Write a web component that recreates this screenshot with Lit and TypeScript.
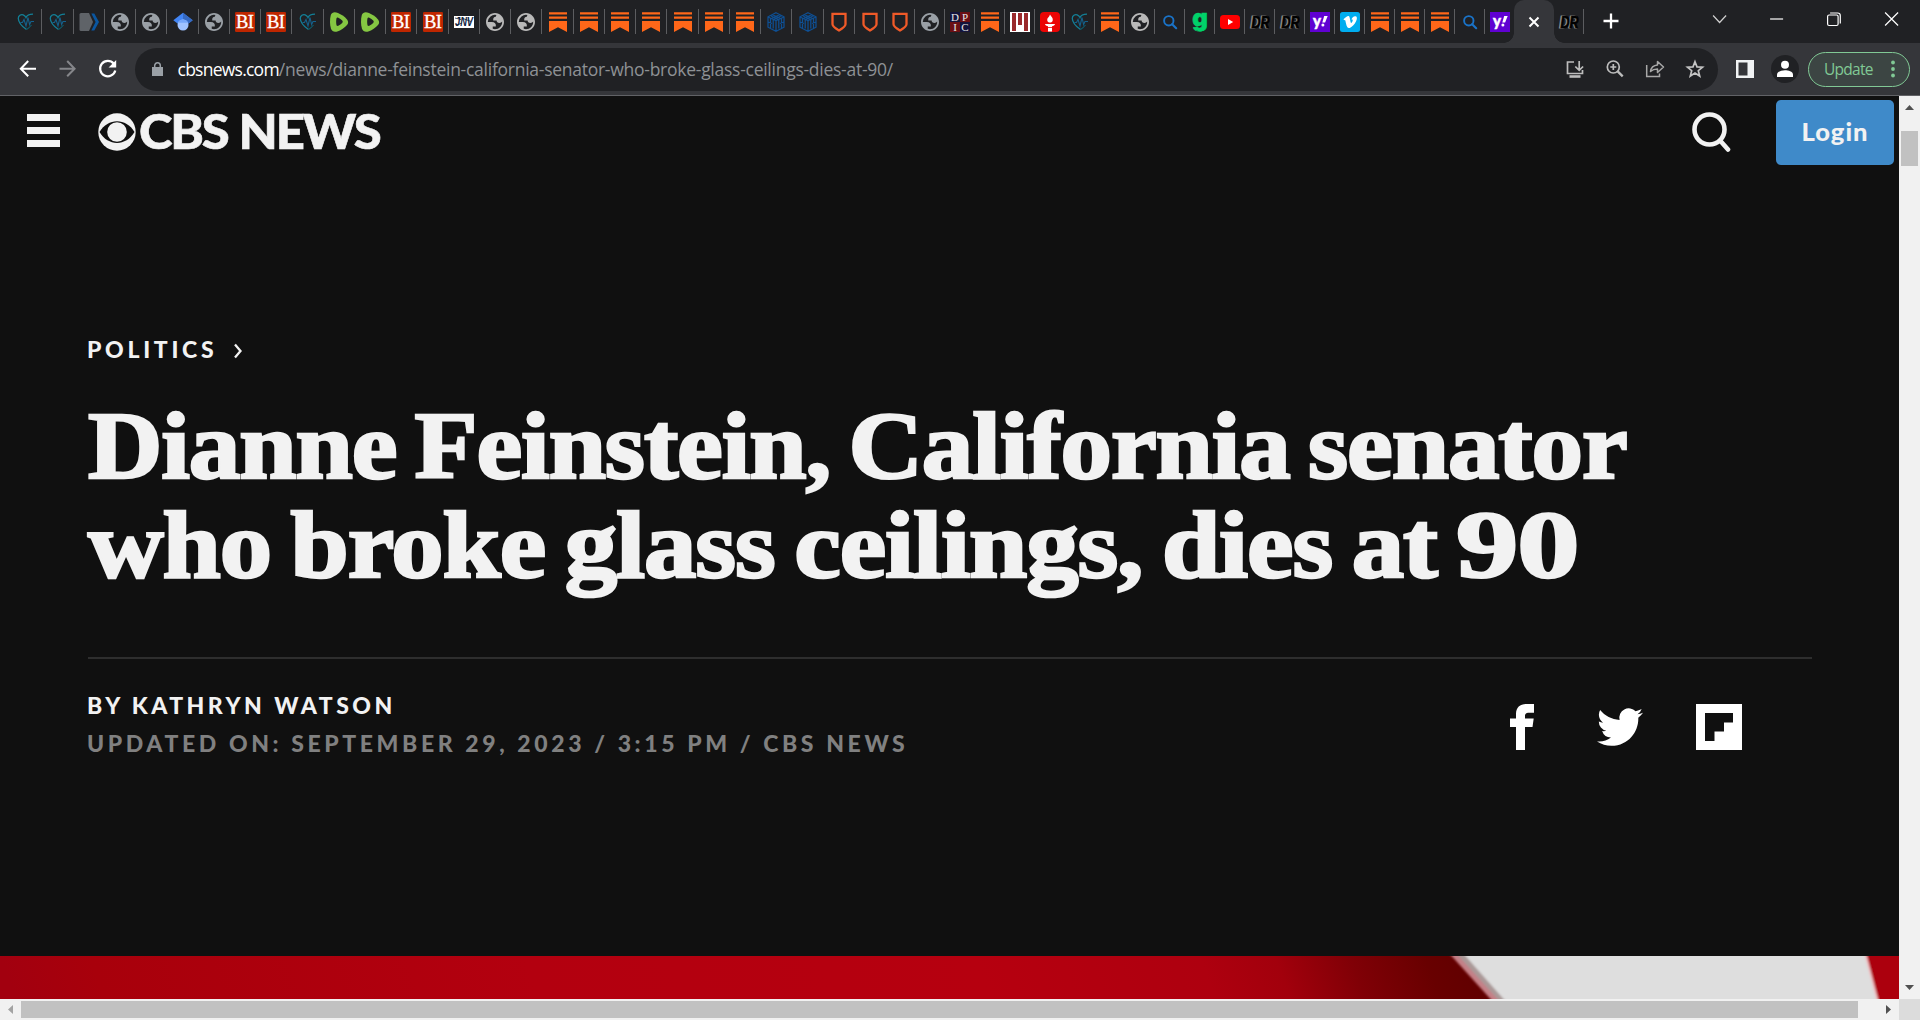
import { LitElement, html, css, svg, nothing } from 'lit';
import type { TemplateResult } from 'lit';
import { customElement, property } from 'lit/decorators.js';

const globe = (fill: string) => svg`
  <g transform="translate(-.8 -.8) scale(.9)">
    <path fill=${fill} fill-rule="evenodd" d="M12 2C6.48 2 2 6.48 2 12s4.48 10 10 10 10-4.48 10-10S17.52 2 12 2zM4 12h4.4c3.407.022 4.922 1.73 4.543 5.127H9.488v2.47a8.004 8.004 0 0 0 10.498-8.083C19.327 12.504 18.332 13 17 13c-2.137 0-3.206-.916-3.206-2.75h-3.748c-.274-2.728.683-4.092 2.87-4.092 0-.975.327-1.597.811-1.97A8.004 8.004 0 0 0 4 12z"/>
  </g>`;

const favicons: Record<string, TemplateResult> = {
  heart: svg`
    <path d="M10.5 17.5C6 14.500 2.500 10.500 2.300 6.500 2.200 3.500 5 2 7.200 2.800c1.400.5 2.300 1.600 2.800 2.800C10.800 3.500 12.500 2.300 17 2.200" fill="none" stroke="#137f96" stroke-width="1.300"/>
    <path d="M10.500 17.500c2-1.300 3.700-2.700 5-4.500" fill="none" stroke="#0d5968" stroke-width="1.200"/>
    <path d="M4.500 10.500h2l1.500-3 2 6.500 2-8.500 1.600 7 1.400-3h3" fill="none" stroke="#14618c" stroke-width="1.100"/>`,
  tag: svg`
    <path d="M.5 2.500q0-1.500 1.500-1.500h8l4 9-4 9H2Q.5 19 .5 17.500z" fill="#5f6368"/>
    <path d="M12.300 1.500h3L20 10l-4.700 8.500h-3L16.600 10z" fill="#0a56a0"/>`,
  globe: globe('#9aa0a6'),
  lightGlobe: globe('#b9b9b9'),
  scholar: svg`
    <path d="M10 .8L.3 8.300l4.200 3.300h11l4.200-3.300z" fill="#4285f4"/>
    <path d="M10 .8l9.700 7.500-4.200 3.300L10 7z" fill="#356ac3"/>
    <circle cx="10" cy="13" r="5.500" fill="#a0c3ff"/>
    <path d="M5 10.700a5.500 5.500 0 0 1 10 0z" fill="#76a7fa"/>`,
  bi: svg`
    <rect width="20" height="20" rx="1.200" fill="#bf2600"/>
    <text x="9.700" y="16.200" text-anchor="middle" font-family="Liberation Serif, serif" font-size="18.500" letter-spacing="-.6" fill="#fff" stroke="#fff" stroke-width=".3">BI</text>`,
  rumble: svg`
    <path d="M1.800 3C3-.3 6.200-.2 9 1c3 1.300 6.600 3.500 9 6.400 1.500 1.900 1.500 3.800 0 5.600-2.600 3-5.800 5-9 6.200-3 1.100-5.900.8-7-2.400C.7 12.800.7 7 1.800 3z" fill="#85c742"/>
    <path d="M7.500 6.300c.3-.8 1-.9 1.800-.5 1.500.7 2.900 1.600 3.900 2.800.7.800.7 1.600 0 2.400-1.100 1.200-2.400 2.100-3.900 2.800-.8.300-1.500.2-1.800-.6-.5-2-.5-4.900 0-6.900z" fill="#202124"/>`,
  nw: svg`
    <rect y="4" width="20" height="12" fill="#fff"/>
    <text x="1" y="14.300" font-family="Liberation Sans, sans-serif" font-weight="700" font-style="italic" font-size="12" textLength="18" lengthAdjust="spacingAndGlyphs" fill="#10243f">JNV</text>
    <path d="M1 6l6 1.500M9 6.500l8 3M3 13l5-2" stroke="#10243f" stroke-width=".8"/>`,
  substack: svg`
    <path d="M1 .2h18v2.300H1zM1 4.500h18v2.300H1zM1 8.900h18V20l-9-4.800L1 20z" fill="#ff6719"/>`,
  cube: svg`
    <path d="M10 .8l8 4v10.400l-8 4-8-4V4.800zM2 5l8 3.600L18 5M10 8.500V19M5 4l8 3.700M6.500 2.800l8 3.700M13.500 2.800l-8 3.700M15.500 3.800l-8 3.700M4.500 6.500v10M7.200 7.500v9M12.800 7.500v9M15.500 6.500v10M2 10l4 1.500M14 11.500l4-1.500" fill="none" stroke="#0e4f93" stroke-width="1.250"/>`,
  shield: svg`
    <path d="M3.500 1.900h13v10.300c0 2-2.800 4-6.500 6.200-3.700-2.200-6.500-4.200-6.500-6.200z" fill="none" stroke="#f05a28" stroke-width="2.300"/>`,
  dpic: svg`
    <path d="M0 0h10v10H0zM10 10h10v10H10z" fill="#14143c"/>
    <path d="M10 0h10v10H10zM0 10h10v10H0z" fill="#6b0f14"/>
    <g font-family="Liberation Serif, serif" font-size="11" fill="#e8e8e8" text-anchor="middle">
      <text x="5" y="8.500">D</text><text x="15" y="8.500">P</text><text x="5" y="18.500">I</text><text x="15" y="18.500">C</text>
    </g>`,
  bars: svg`
    <rect width="20" height="20" fill="#fff"/>
    <path d="M2 1h4v18H2zM8 1h4v12H8zM14 1h4v18h-4z" fill="#9a2a2c"/>`,
  torch: svg`
    <rect width="20" height="20" rx="4" fill="#eb0505"/>
    <path d="M10 2.500c.8 2 3 3 2.800 5.400-.2 1.800-1.500 2.700-2.800 2.700s-2.700-.9-2.800-2.700C7 6 9.300 5 10 2.500zM5 12h10c-.3 1.500-1.500 2-3 2.200V19.500H8v-5.300c-1.500-.2-2.700-.7-3-2.200z" fill="#fff"/>
    <path d="M8 15h4v.8H8z" fill="#eb0505"/>`,
  search: svg`
    <circle cx="8.800" cy="8.800" r="4.700" fill="none" stroke="#1a73c8" stroke-width="1.900"/>
    <path d="M12.200 12.200l4 4" stroke="#1a73c8" stroke-width="2.100" stroke-linecap="round"/>`,
  g: svg`
    <text x="10" y="14" text-anchor="middle" font-family="Inter, Liberation Sans, sans-serif" font-weight="900" font-size="24" fill="#00d26a" stroke="#00d26a" stroke-width=".6">g</text>`,
  youtube: svg`
    <rect y="3" width="20" height="14" rx="3.500" fill="#f00"/>
    <path d="M8 7l5.200 3L8 13z" fill="#fff"/>`,
  dr: svg`
    <g font-family="Liberation Sans, sans-serif" font-weight="700" font-style="italic" font-size="16.500">
      <text x="0" y="16" textLength="18.500" lengthAdjust="spacingAndGlyphs" fill="#969696" stroke="#8c8c8c" stroke-width=".8">DR</text>
      <text x="1.600" y="16" textLength="18" lengthAdjust="spacingAndGlyphs" fill="#000" stroke="#000" stroke-width=".7">DR</text>
    </g>`,
  yahoo: svg`
    <rect width="20" height="20" fill="#6001d2"/>
    <text x="3" y="14" font-family="Lato, sans-serif" font-weight="900" font-size="15" fill="#fff" stroke="#fff" stroke-width=".5">y</text>
    <path d="M14.200 4h3.500l-2.600 6.500h-2.800z" fill="#fff"/><circle cx="12.900" cy="13" r="1.500" fill="#fff"/>`,
  vimeo: svg`
    <rect width="20" height="20" rx="2.500" fill="#00adef"/>
    <path d="M3.500 7.200c2-1.800 3.900-3.300 5-3.100 1.700.3 1.600 6.300 2.600 6.900.6.300 1.900-1.900 1.600-2.900-.2-.6-.8-.6-1.300-.3.700-2.600 2.300-3.900 4.200-3.600 3.500.7-.6 9.300-5.800 11.700-2.300.8-3-1.400-3.600-3.600-.5-2-.9-4.200-1.300-4.200l-.7.200z" fill="#fff"/>`,
};

// Background tabs before the active one; the first group keeps a slightly wider slot.
const wideTabs = [
  'heart', 'heart', 'tag', 'globe', 'globe', 'scholar', 'globe', 'bi', 'bi', 'heart', 'rumble', 'rumble',
  'bi', 'bi', 'nw', 'lightGlobe', 'lightGlobe', 'substack', 'substack', 'substack', 'substack', 'substack',
  'substack', 'substack', 'cube', 'cube', 'shield',
];
const narrowTabs = [
  'shield', 'shield', 'globe', 'dpic', 'substack', 'bars', 'torch', 'heart', 'substack', 'lightGlobe', 'search',
  'g', 'youtube', 'dr', 'dr', 'yahoo', 'vimeo', 'substack', 'substack', 'substack', 'search', 'yahoo',
];

@customElement('browser-tab')
export class BrowserTab extends LitElement {
  static styles = css`
    :host {
      display: flex;
      align-items: center;
      justify-content: center;
      flex: none;
      width: 30px;
      height: 25px;
      padding-left: 1.5px;
      box-sizing: border-box;
      border-right: 1px solid #5c5d60;
    }

    :host([wide]) {
      width: 31.25px;
      padding-left: 0.5px;
    }

    :host([last]) {
      border-right-color: transparent;
    }

    svg {
      display: block;
      overflow: visible;
    }
  `;

  @property() icon = 'globe';

  render() {
    return html`<svg width="20" height="20" viewBox="0 0 20 20">${favicons[this.icon] ?? nothing}</svg>`;
  }
}

@customElement('browser-chrome')
export class BrowserChrome extends LitElement {
  static styles = css`
    :host {
      display: block;
      font-family: 'Open Sans', 'Noto Sans', sans-serif;
    }

    svg {
      display: block;
      fill: none;
    }

    .tabs {
      display: flex;
      height: 43px;
      padding-left: 11px;
      background: #202124;
      align-items: flex-start;
    }

    browser-tab {
      margin-top: 9px;
    }

    .active {
      position: relative;
      flex: none;
      width: 40px;
      height: 43px;
      margin-left: -1px;
      display: flex;
      align-items: center;
      justify-content: center;
      background: #35363a;
      border-radius: 10px 10px 0 0;
    }

    .active::before,
    .active::after {
      content: '';
      position: absolute;
      bottom: 0;
      width: 10px;
      height: 10px;
    }

    .active::before {
      left: -10px;
      background: radial-gradient(circle at 0 0, transparent 9.5px, #35363a 10px);
    }

    .active::after {
      right: -10px;
      background: radial-gradient(circle at 100% 0, transparent 9.5px, #35363a 10px);
    }

    .new-tab {
      margin: 13px 0 0 19.5px;
    }

    .window {
      display: flex;
      margin-left: auto;
      height: 37px;
      align-items: center;
    }

    .window svg {
      width: 57.3px;
    }

    .toolbar {
      display: flex;
      align-items: center;
      height: 52px;
      padding-left: 8px;
      background: #35363a;
      border-bottom: 1px solid #616266;
    }

    .btn {
      flex: none;
      width: 40px;
      height: 40px;
      display: flex;
      align-items: center;
      justify-content: center;
    }

    .omnibox {
      flex: none;
      box-sizing: border-box;
      display: flex;
      align-items: center;
      width: 1583px;
      height: 43px;
      margin: 0 7px;
      padding: 0 3px 0 17px;
      border-radius: 22px;
      background: #202124;
    }

    .url {
      flex: 1;
      margin-left: 14.5px;
      font-size: 17.5px;
      line-height: 24px;
      letter-spacing: -0.26px;
      white-space: nowrap;
      color: #8e9195;
    }

    .host {
      color: #fff;
      letter-spacing: -0.75px;
    }

    .avatar {
      width: 28px;
      height: 28px;
      border-radius: 50%;
      background: #202124;
    }

    .update {
      box-sizing: border-box;
      display: flex;
      align-items: center;
      justify-content: space-between;
      width: 102px;
      height: 35px;
      margin-left: 3px;
      padding: 0 13px 0 15px;
      border: 1px solid #81c995;
      border-radius: 18px;
      background: #3c4543;
      color: #81c995;
      font-size: 15.5px;
      letter-spacing: -0.75px;
    }
  `;

  render() {
    return html`
      <div class="tabs">
        ${wideTabs.map((icon) => html`<browser-tab wide icon=${icon}></browser-tab>`)}
        ${narrowTabs.map(
          (icon, i) => html`<browser-tab icon=${icon} ?last=${i === narrowTabs.length - 1}></browser-tab>`,
        )}
        <div class="active">
          <svg width="12" height="12" viewBox="0 0 12 12"><path d="M1.500 1.500l9 9M10.500 1.500l-9 9" stroke="#fff" stroke-width="2"/></svg>
        </div>
        <browser-tab icon="dr"></browser-tab>
        <svg class="new-tab" width="16" height="16" viewBox="0 0 16 16"><path d="M8 .5v15M.5 8h15" stroke="#fff" stroke-width="2.300"/></svg>
        <div class="window">
          <svg height="20" viewBox="-28.600 -10 57.300 20"><path d="M-6.500-3.500L0 3.500l6.500-7" stroke="#d0d0d0" stroke-width="1.200"/></svg>
          <svg height="20" viewBox="-28.600 -10 57.300 20"><path d="M-6.500 0h13" stroke="#fff" stroke-width="1.200"/></svg>
          <svg height="20" viewBox="-28.600 -10 57.300 20">
            <rect x="-6" y="-4" width="10.500" height="10.500" rx="1.500" stroke="#fff" stroke-width="1.200"/>
            <path d="M-3.500-6H4q2.700 0 2.700 2.700v7.800" stroke="#fff" stroke-width="1.200"/>
          </svg>
          <svg height="20" viewBox="-28.600 -10 57.300 20"><path d="M-6.500-6.500l13 13M6.500-6.500l-13 13" stroke="#fff" stroke-width="1.200"/></svg>
        </div>
      </div>

      <div class="toolbar">
        <div class="btn"><svg width="20" height="20" viewBox="0 0 20 20"><path d="M18 9.700H3M10.200 2L2.800 9.700l7.400 7.600" stroke="#fff" stroke-width="2"/></svg></div>
        <div class="btn"><svg width="20" height="20" viewBox="0 0 20 20"><path d="M1.500 9.700h15M9.200 2l7.400 7.700-7.400 7.600" stroke="#85868a" stroke-width="2"/></svg></div>
        <div class="btn"><svg width="20" height="20" viewBox="0 0 20 20"><path d="M17.300 11.500A7.700 7.700 0 1 1 15.800 4.700" stroke="#fff" stroke-width="2.200"/><path d="M18.200 1v7.600h-7.600z" fill="#fff"/></svg></div>

        <div class="omnibox">
          <svg width="11" height="14" viewBox="0 0 11 14"><path d="M0 5h11v9H0z" fill="#9aa0a6"/><path d="M2.700 6V3.600a2.800 2.800 0 0 1 5.600 0V6" stroke="#9aa0a6" stroke-width="1.500"/></svg>
          <div class="url"><span class="host">cbsnews.com</span>/news/dianne-feinstein-california-senator-who-broke-glass-ceilings-dies-at-90/</div>
          <div class="btn"><svg width="20" height="20" viewBox="0 0 20 20" stroke="#bdbdbd" stroke-width="1.700"><path d="M9 3H2.500v11.500h15V11M14.200 2v9M10.300 7.500l3.900 3.900 3.900-3.900"/><path d="M4.500 17.500h11" stroke-width="2.600"/></svg></div>
          <div class="btn"><svg width="20" height="20" viewBox="0 0 20 20" stroke="#bdbdbd" stroke-width="1.700"><circle cx="8.300" cy="8" r="6"/><path d="M5.300 8h6M8.300 5v6"/><path d="M12.700 12.400l5 5" stroke-width="2.300"/></svg></div>
          <div class="btn"><svg width="20" height="20" viewBox="0 0 20 20" stroke="#a8a8a8" stroke-width="1.500"><path d="M1.700 6v11.500h12.800V14.500"/><path d="M5.500 12.500c.5-4 3-6.300 7-6.600V2.500l6 5.500-6 5.500V10c-3 0-5 .6-7 2.500z" stroke-linejoin="round"/></svg></div>
          <div class="btn"><svg width="20" height="20" viewBox="0 0 20 20" stroke="#c4c4c4" stroke-width="1.700"><path d="M10 2.700l2 5.200 5.500.3-4.200 3.500 1.400 5.300L10 14l-4.700 3 1.400-5.300-4.200-3.500 5.500-.3z"/></svg></div>
        </div>

        <div class="btn"><svg width="18" height="18" viewBox="0 0 18 18"><path d="M0 0h18v18H0z" fill="#f1f3f4"/><path d="M2.500 2.500h9v13h-9z" fill="#35363a"/></svg></div>
        <div class="btn"><div class="avatar"><svg width="28" height="28" viewBox="0 0 28 28"><circle cx="14" cy="9.800" r="4" fill="#fff"/><path d="M6 22v-2.500c0-3 5-4.300 8-4.300s8 1.300 8 4.300V22z" fill="#fff"/></svg></div></div>
        <div class="update">
          Update
          <svg width="6" height="18" viewBox="0 0 6 18"><g fill="#81c995"><circle cx="3" cy="2.500" r="1.900"/><circle cx="3" cy="9" r="1.900"/><circle cx="3" cy="15.500" r="1.900"/></g></svg>
        </div>
      </div>
    `;
  }
}

@customElement('news-page')
export class NewsPage extends LitElement {
  static styles = css`
    :host {
      display: flex;
      flex-direction: column;
      background: #101010;
      color: #f2f2f2;
      font-family: Lato, sans-serif;
      overflow: hidden;
    }

    svg {
      display: block;
      flex: none;
    }

    header {
      display: flex;
      align-items: center;
      height: 71px;
      padding: 0 5px 0 27px;
      box-sizing: border-box;
    }

    .menu {
      display: grid;
      gap: 6px;
      width: 33px;
      margin-bottom: 2px;
    }

    .menu i {
      height: 7px;
      background: #f2f2f2;
    }

    .eye {
      margin: 0 0 0 38px;
    }

    .brand {
      margin-left: 3px;
      font-size: 47px;
      font-weight: 900;
      line-height: 47px;
      letter-spacing: -2px;
      word-spacing: 1px;
      white-space: nowrap;
      transform: scaleX(1.08);
      transform-origin: left;
      -webkit-text-stroke: 0.6px #f2f2f2;
    }

    .find {
      margin-left: auto;
    }

    .login {
      display: flex;
      align-items: center;
      justify-content: center;
      box-sizing: border-box;
      width: 118px;
      height: 65px;
      margin: 2px 0 0 45px;
      padding-bottom: 3px;
      border-radius: 5px;
      background: #3f8ac9;
      font-size: 25.5px;
      font-weight: 900;
      letter-spacing: 1px;
    }

    article {
      flex: 1;
      padding: 167px 87px 0 88px;
    }

    .section {
      display: flex;
      align-items: center;
      height: 30px;
      margin-left: -1px;
      font-size: 23px;
      font-weight: 900;
      letter-spacing: 3.7px;
    }

    .section svg {
      margin: 3px 0 0 16px;
    }

    h1 {
      margin: 32px 0 0;
      font-family: 'Liberation Serif', serif;
      font-size: 96px;
      font-weight: 700;
      line-height: 99px;
      letter-spacing: -1px;
      white-space: nowrap;
      -webkit-text-stroke: 2.6px #f2f2f2;
    }

    h1 span {
      display: block;
      transform-origin: left;
    }

    .one {
      word-spacing: -6px;
      transform: scaleX(1.073);
    }

    .two {
      word-spacing: -5px;
      transform: scaleX(1.091);
    }

    h1 .age {
      display: inline-block;
      width: 89px;
      transform: scaleX(1.19);
    }

    .meta {
      display: flex;
      justify-content: space-between;
      margin-top: 63px;
      padding: 27px 70px 0 0;
      border-top: 2px solid #2e2e2e;
      font-size: 23px;
      font-weight: 900;
      line-height: 38px;
      white-space: nowrap;
    }

    .author {
      margin-left: -1px;
      letter-spacing: 3.48px;
    }

    .date {
      margin-left: -1px;
      color: #808080;
      letter-spacing: 3.6px;
    }

    .share {
      display: flex;
      margin-top: 18px;
    }

    .bird {
      margin-left: 63px;
    }

    .board {
      margin-left: 53px;
    }

    .photo {
      height: 43px;
      width: 1899px;
    }
  `;

  render() {
    return html`
      <header>
        <div class="menu"><i></i><i></i><i></i></div>
        <svg class="eye" width="38" height="38" viewBox="-19 -19 38 38">
          <circle r="18.700" fill="#f2f2f2"/>
          <path d="M-17.500 0C-9-14.500 9-14.500 17.500 0 9 14.500-9 14.500-17.500 0z" fill="#101010"/>
          <circle r="9.800" fill="#f2f2f2"/>
        </svg>
        <div class="brand">CBS NEWS</div>
        <svg class="find" width="40" height="42" viewBox="0 0 40 42" fill="none" stroke="#f2f2f2" stroke-width="4.600" stroke-linecap="round">
          <circle cx="18.500" cy="18.500" r="15"/>
          <path d="M29.500 30l7.500 8.500"/>
        </svg>
        <div class="login">Login</div>
      </header>

      <article>
        <div class="section">
          POLITICS
          <svg width="10" height="16" viewBox="0 0 10 16"><path d="M2 1.500l5.500 6.500L2 14.500" fill="none" stroke="#f2f2f2" stroke-width="2.300"/></svg>
        </div>
        <h1>
          <span class="one">Dianne Feinstein, California senator</span>
          <span class="two">who broke glass ceilings, dies at <span class="age">90</span></span>
        </h1>
        <div class="meta">
          <div>
            <div class="author">BY KATHRYN WATSON</div>
            <div class="date">UPDATED ON: SEPTEMBER 29, 2023 / 3:15 PM / CBS NEWS</div>
          </div>
          <div class="share">
            <svg width="24" height="46" viewBox="0 0 24 46"><path d="M6 46V23H0v-8.500h6V10C6 3.500 10 0 16 0h8v8.800h-5c-3.200 0-4 1.200-4 3.500v2.200h8.700L22.500 23H15v23z" fill="#fff"/></svg>
            <svg class="bird" width="46" height="46" viewBox="0 0 24 24"><path fill="#fff" d="M23.953 4.570a10 10 0 01-2.825.775 4.958 4.958 0 002.163-2.723c-.951.555-2.005.959-3.127 1.184a4.920 4.920 0 00-8.384 4.482C7.690 8.095 4.067 6.130 1.640 3.162a4.822 4.822 0 00-.666 2.475c0 1.710.870 3.213 2.188 4.096a4.904 4.904 0 01-2.228-.616v.060a4.923 4.923 0 003.946 4.827 4.996 4.996 0 01-2.212.085 4.936 4.936 0 004.604 3.417 9.867 9.867 0 01-6.102 2.105c-.390 0-.779-.023-1.170-.067a13.995 13.995 0 007.557 2.209c9.053 0 13.998-7.496 13.998-13.985 0-.210 0-.420-.015-.630A9.935 9.935 0 0024 4.590z"/></svg>
            <svg class="board" width="46" height="46" viewBox="0 0 46 46"><path fill="#fff" fill-rule="evenodd" d="M0 0h46v46H0zM9 9v28h9.500v-9.500H28V18.500h9V9z"/></svg>
          </div>
        </div>
      </article>

      <svg class="photo" viewBox="0 0 1899 43" preserveAspectRatio="none">
        <defs>
          <linearGradient id="red" gradientUnits="userSpaceOnUse" x1="0" y1="0" x2="1500" y2="0" gradientTransform="skewX(20)">
            <stop offset="0" stop-color="#a2000f"/>
            <stop offset=".06" stop-color="#a8000b"/>
            <stop offset=".35" stop-color="#b3000f"/>
            <stop offset=".65" stop-color="#b6000f"/>
            <stop offset=".8" stop-color="#ae000f"/>
            <stop offset=".85" stop-color="#a2000c"/>
            <stop offset=".9" stop-color="#800006"/>
            <stop offset=".95" stop-color="#680000"/>
            <stop offset="1" stop-color="#5c0000"/>
          </linearGradient>
          <filter id="soft"><feGaussianBlur stdDeviation="1"/></filter>
        </defs>
        <path d="M0 0h1899v43H0z" fill="url(#red)"/>
        <g filter="url(#soft)">
          <path d="M1448-4l47 52h400V-4z" fill="#c58087"/>
          <path d="M1455-4l47 52h393V-4z" fill="#aa9998"/>
          <path d="M1462-4l46 52h391V-4z" fill="#dedede"/>
          <path d="M1864-4l13.500 52H1910V-4z" fill="#f0b8bc"/>
          <path d="M1866-4l13.500 52H1910V-4z" fill="#ac000c"/>
        </g>
      </svg>
    `;
  }
}

@customElement('app-root')
export class AppRoot extends LitElement {
  static styles = css`
    :host {
      display: flex;
      flex-direction: column;
      width: 1920px;
      height: 1020px;
      overflow: hidden;
      background: #101010;
    }

    .view {
      flex: 1;
      display: grid;
      grid-template-columns: 1899px 21px;
      grid-template-rows: 903px 21px;
    }

    .vbar,
    .hbar {
      display: flex;
      align-items: center;
      background: #f1f1f1;
    }

    .vbar {
      flex-direction: column;
      padding: 9px 0;
      box-sizing: border-box;
    }

    .vbar .thumb {
      width: 17px;
      height: 35px;
      margin-top: 21px;
    }

    .vbar svg:last-child {
      margin-top: auto;
    }

    .hbar {
      padding: 0 8px;
    }

    .hbar .thumb {
      width: 1837px;
      height: 17px;
      margin-left: 8px;
    }

    .hbar svg:last-child {
      margin-left: auto;
    }

    .thumb {
      background: #c1c1c1;
    }

    .corner {
      background: #dcdcdc;
    }

    svg {
      display: block;
    }
  `;

  render() {
    return html`
      <browser-chrome></browser-chrome>
      <div class="view">
        <news-page></news-page>
        <div class="vbar">
          <svg width="9" height="5"><path d="M0 5l4.500-5L9 5z" fill="#505050"/></svg>
          <div class="thumb"></div>
          <svg width="9" height="5"><path d="M0 0l4.500 5L9 0z" fill="#505050"/></svg>
        </div>
        <div class="hbar">
          <svg width="5" height="9"><path d="M5 0L0 4.500 5 9z" fill="#a3a3a3"/></svg>
          <div class="thumb"></div>
          <svg width="5" height="9"><path d="M0 0l5 4.500L0 9z" fill="#505050"/></svg>
        </div>
        <div class="corner"></div>
      </div>
    `;
  }
}

declare global {
  interface HTMLElementTagNameMap {
    'app-root': AppRoot;
    'browser-chrome': BrowserChrome;
    'browser-tab': BrowserTab;
    'news-page': NewsPage;
  }
}
